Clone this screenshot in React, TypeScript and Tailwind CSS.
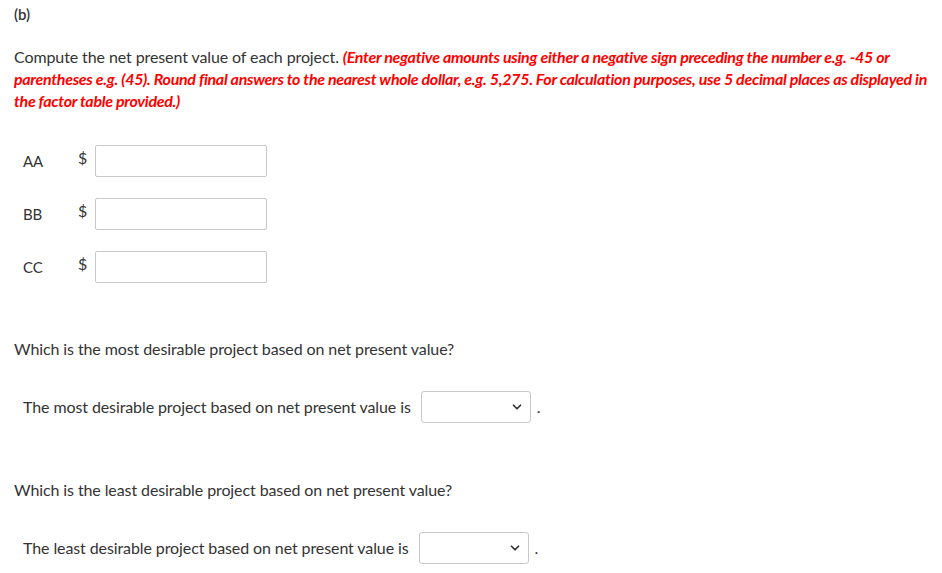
import { ChevronDown } from "lucide-react";

const projects = ["AA", "BB", "CC"];

function SelectBox() {
  return (
    <div className="flex h-[32px] w-[110px] items-center justify-end rounded-[3px] border border-[#c8c8c8] bg-white pr-[6px]">
      <ChevronDown className="h-[14px] w-[14px] text-[#333]" strokeWidth={3} />
    </div>
  );
}

export default function App() {
  return (
    <div className="min-h-screen bg-white text-[16px] text-[#333] tracking-[-0.1px] font-['Lato',sans-serif]">
      <div className="w-[937px] pl-[14px] pt-[3px]">
        <p className="text-[15px] font-semibold leading-[22px]">(b)</p>

        <p className="mt-[21px] leading-[22px]">
          Compute the net present value of each project.{" "}
          <span className="font-bold italic text-[#ff0000] tracking-[-0.3px]">
            (Enter negative amounts using either a negative sign preceding the number e.g. -45 or
            parentheses e.g. (45). Round final answers to the nearest whole dollar, e.g. 5,275. For
            calculation purposes, use 5 decimal places as displayed in the factor table provided.)
          </span>
        </p>

        <div className="mt-[33px] flex flex-col gap-[21px] pl-[9px]">
          {projects.map((p) => (
            <div key={p} className="flex items-center">
              <span className="w-[55px] text-[15px]">{p}</span>
              <span className="w-[17px] -mt-[6px]">$</span>
              <input
                type="text"
                className="h-[32px] w-[172px] rounded-[2px] border border-[#c8c8c8] bg-white outline-none"
              />
            </div>
          ))}
        </div>

        <p className="mt-[55px] leading-[22px]">
          Which is the most desirable project based on net present value?
        </p>

        <div className="mt-[31px] flex items-center pl-[9px]">
          <span>The most desirable project based on net present value is</span>
          <span className="ml-[10px]">
            <SelectBox />
          </span>
          <span className="ml-[6px]">.</span>
        </div>

        <p className="mt-[56px] leading-[22px]">
          Which is the least desirable project based on net present value?
        </p>

        <div className="mt-[31px] flex items-center pl-[9px]">
          <span>The least desirable project based on net present value is</span>
          <span className="ml-[10px]">
            <SelectBox />
          </span>
          <span className="ml-[6px]">.</span>
        </div>
      </div>
    </div>
  );
}
